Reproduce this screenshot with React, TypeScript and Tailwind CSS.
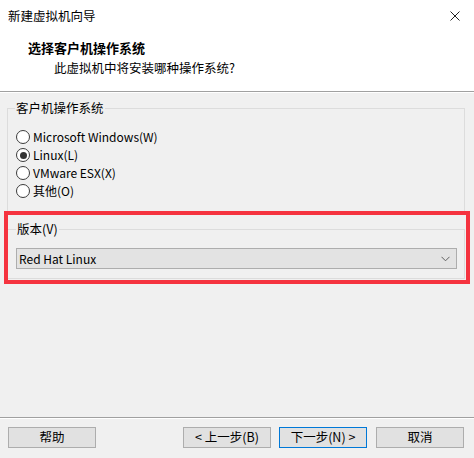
import React from "react";

const font = { fontFamily: '"Noto Sans CJK SC", "Noto Sans", sans-serif' };

function Radio({ checked, label }: { checked?: boolean; label: string }) {
  return (
    <div className="flex h-[18px] items-center">
      <div className="ml-[8px] flex h-[14px] w-[14px] items-center justify-center rounded-full border border-[#3c3c3c] bg-white">
        {checked && <div className="h-[7px] w-[7px] rounded-full bg-[#333333]" />}
      </div>
      <span className="ml-[3px] text-[12px] leading-[18px] text-black">{label}</span>
    </div>
  );
}

function Btn({ label, primary, className }: { label: string; primary?: boolean; className?: string }) {
  return (
    <div
      className={
        "flex h-[21px] w-[88px] items-center justify-center bg-[#e1e1e1] text-[12.5px] leading-none text-black border " +
        (primary ? "border-[#0078d7] " : "border-[#adadad] ") +
        (className ?? "")
      }
    >
      {label}
    </div>
  );
}

export default function App() {
  return (
    <div style={font} className="relative flex h-[458px] w-[474px] flex-col overflow-hidden bg-[#f0f0f0] text-black">
      {/* header */}
      <div className="h-[91px] bg-white">
        <div className="flex h-[32px] items-center justify-between pl-[8px] pr-[14px]">
          <span className="text-[12.5px] leading-none">新建虚拟机向导</span>
          <svg width="10" height="10" viewBox="0 0 10 10" className="block">
            <path d="M0.5 0.5 L9.5 9.5 M9.5 0.5 L0.5 9.5" stroke="#222" strokeWidth="1" fill="none" />
          </svg>
        </div>
        <div className="pl-[28px] pt-[7px] text-[13px] font-bold leading-[18px]">选择客户机操作系统</div>
        <div className="mt-[2px] pl-[54px] text-[12.5px] leading-[18px]">此虚拟机中将安装哪种操作系统?</div>
      </div>
      <div className="h-px bg-[#a0a0a0]" />
      <div className="h-px bg-white" />

      {/* content */}
      <div className="flex flex-col px-[7px] pr-[9px]">
        <fieldset className="mt-[7px] border border-[#dcdcdc] px-[7px] pb-[11px] pt-[12px]">
          <legend className="px-[1px] text-[12.5px] leading-[16px]">客户机操作系统</legend>
          <div className="-ml-[7px] flex flex-col">
            <Radio label="Microsoft Windows(W)" />
            <Radio checked label="Linux(L)" />
            <Radio label="VMware ESX(X)" />
            <Radio label="其他(O)" />
          </div>
        </fieldset>

        <fieldset className="mt-[9px] border border-[#dcdcdc] px-[8px] pr-[7px] pb-[9px] pt-[11px]">
          <legend className="px-[1px] text-[12.5px] leading-[16px]">版本(V)</legend>
          <div className="flex h-[21px] items-center justify-between border border-[#adadad] bg-[#e3e3e3] pl-[2px] pr-[6px]">
            <span className="text-[12px] leading-none">Red Hat Linux</span>
            <svg width="9" height="6" viewBox="0 0 9 6" className="block">
              <path d="M0.5 0.8 L4.5 4.8 L8.5 0.8" stroke="#606060" strokeWidth="1" fill="none" />
            </svg>
          </div>
        </fieldset>
      </div>

      {/* bottom */}
      <div className="mt-auto">
        <div className="h-px bg-[#a0a0a0]" />
        <div className="h-px bg-white" />
        <div className="flex items-center pb-[10px] pl-[8px] pr-[10px] pt-[8px]">
          <Btn label="帮助" />
          <div className="flex-1" />
          <Btn label="< 上一步(B)" />
          <Btn label="下一步(N) >" primary className="ml-[8px]" />
          <Btn label="取消" className="ml-[9px]" />
        </div>
      </div>

      {/* red annotation overlay */}
      <div className="pointer-events-none absolute left-[4px] top-[211px] h-[73px] w-[466px] border-[4px] border-[#f5333f]" />
    </div>
  );
}
